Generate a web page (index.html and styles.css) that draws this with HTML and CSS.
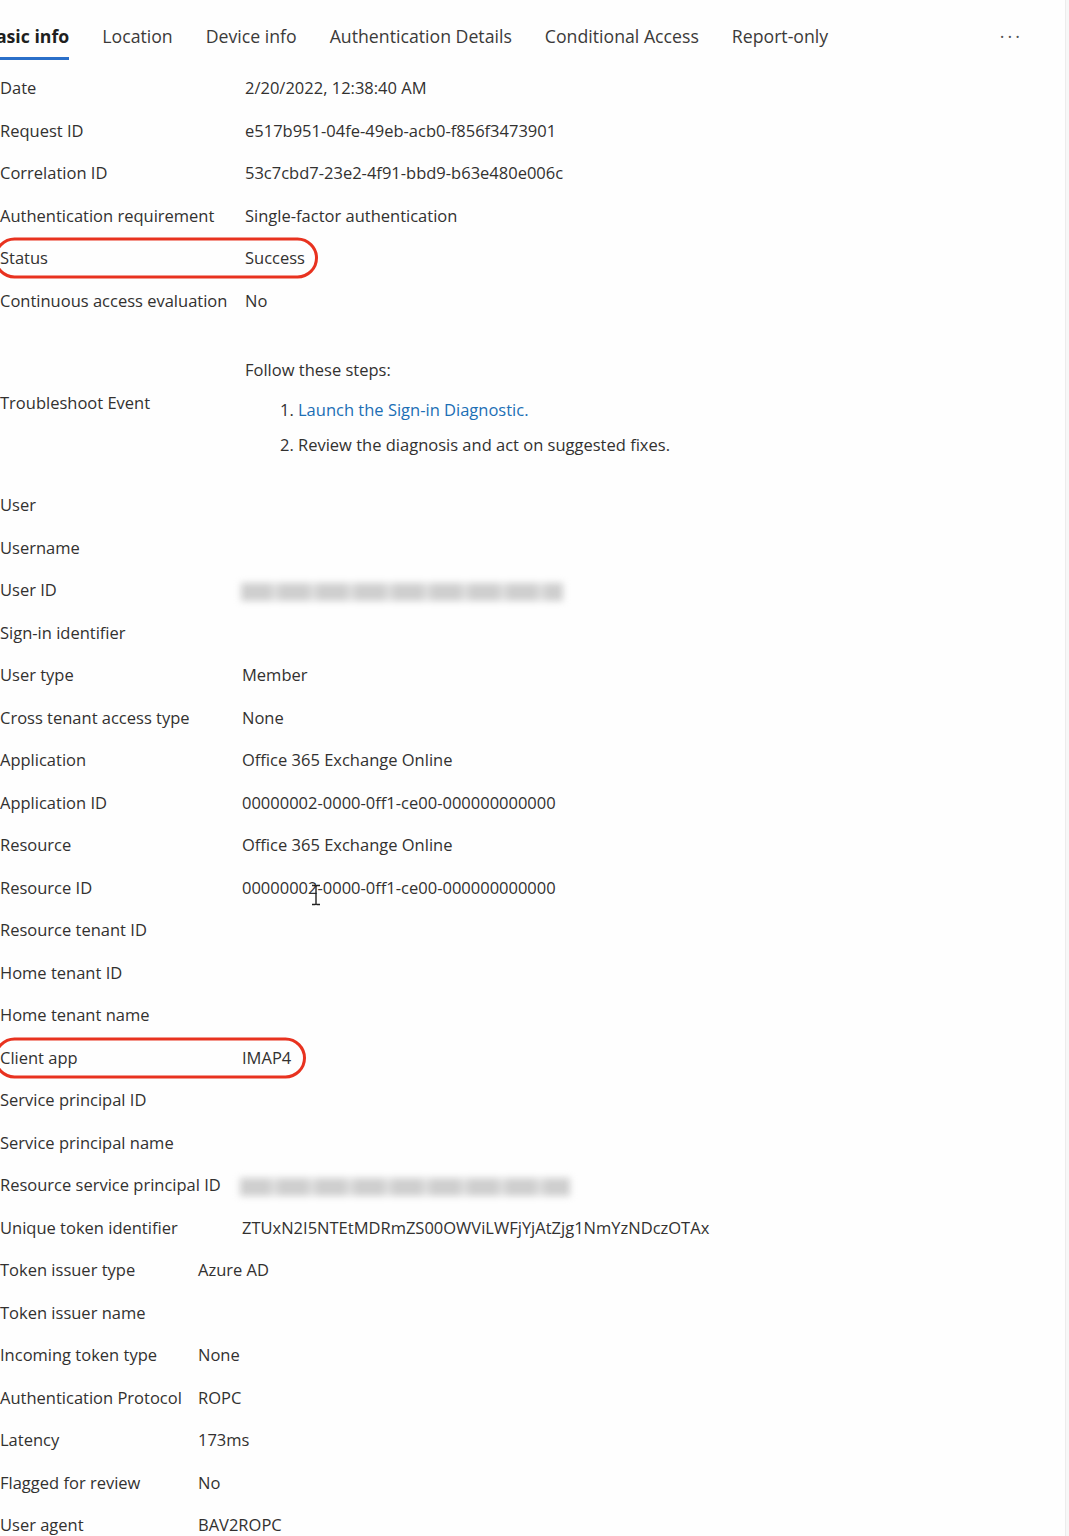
FILE: index.html
```html
<!DOCTYPE html>
<html lang="en">
<head>
<meta charset="utf-8">
<title>Sign-in details - Basic info</title>
<link rel="stylesheet" href="styles.css">
</head>
<body>
<div class="page">
  <nav class="tabs">
    <span class="tab active">Basic info</span>
    <span class="tab">Location</span>
    <span class="tab">Device info</span>
    <span class="tab">Authentication Details</span>
    <span class="tab">Conditional Access</span>
    <span class="tab">Report-only</span>
    <span class="more">&middot;&middot;&middot;</span>
  </nav>

  <div class="details s1">
    <div class="label">Date</div><div class="value">2/20/2022, 12:38:40 AM</div>
    <div class="label">Request ID</div><div class="value">e517b951-04fe-49eb-acb0-f856f3473901</div>
    <div class="label">Correlation ID</div><div class="value">53c7cbd7-23e2-4f91-bbd9-b63e480e006c</div>
    <div class="label">Authentication requirement</div><div class="value">Single-factor authentication</div>
    <div class="label hl-wrap">Status<span class="ring ring-status"></span></div><div class="value">Success</div>
    <div class="label">Continuous access evaluation</div><div class="value">No</div>
    <div class="label trouble-label">Troubleshoot Event</div>
    <div class="value trouble">
      <div class="steps-title">Follow these steps:</div>
      <ol class="steps">
        <li><span class="num">1.</span><a class="link" href="#">Launch the Sign-in Diagnostic.</a></li>
        <li><span class="num">2.</span><span>Review the diagnosis and act on suggested fixes.</span></li>
      </ol>
    </div>
  </div>

  <div class="details s2">
    <div class="label">User</div><div class="value"></div>
    <div class="label">Username</div><div class="value"></div>
    <div class="label">User ID</div><div class="value"><span class="blurred b-user"></span></div>
    <div class="label">Sign-in identifier</div><div class="value"></div>
    <div class="label">User type</div><div class="value">Member</div>
    <div class="label">Cross tenant access type</div><div class="value">None</div>
    <div class="label">Application</div><div class="value">Office 365 Exchange Online</div>
    <div class="label">Application ID</div><div class="value">00000002-0000-0ff1-ce00-000000000000</div>
    <div class="label">Resource</div><div class="value">Office 365 Exchange Online</div>
    <div class="label">Resource ID</div><div class="value cursor-wrap">00000002-0000-0ff1-ce00-000000000000<svg class="ibeam" width="12" height="22" viewBox="0 0 12 22"><path d="M2 1.5h3.2M6.8 1.5H10M6 2.2v17.6M2 20.5h3.2M6.8 20.5H10M5.2 1.5Q6 1.8 6 2.5M6.8 1.5Q6 1.8 6 2.5M5.2 20.5Q6 20.2 6 19.5M6.8 20.5Q6 20.2 6 19.5" fill="none" stroke="#222" stroke-width="1.4"/></svg></div>
    <div class="label">Resource tenant ID</div><div class="value"></div>
    <div class="label">Home tenant ID</div><div class="value"></div>
    <div class="label">Home tenant name</div><div class="value"></div>
    <div class="label hl-wrap">Client app<span class="ring ring-client"></span></div><div class="value">IMAP4</div>
    <div class="label">Service principal ID</div><div class="value"></div>
    <div class="label">Service principal name</div><div class="value"></div>
    <div class="label">Resource service principal ID</div><div class="value"><span class="blurred b-rsp"></span></div>
    <div class="label">Unique token identifier</div><div class="value token">ZTUxN2I5NTEtMDRmZS00OWViLWFjYjAtZjg1NmYzNDczOTAx</div>
  </div>

  <div class="details s3">
    <div class="label">Token issuer type</div><div class="value">Azure AD</div>
    <div class="label">Token issuer name</div><div class="value"></div>
    <div class="label">Incoming token type</div><div class="value">None</div>
    <div class="label">Authentication Protocol</div><div class="value">ROPC</div>
    <div class="label">Latency</div><div class="value">173ms</div>
    <div class="label">Flagged for review</div><div class="value">No</div>
    <div class="label">User agent</div><div class="value">BAV2ROPC</div>
  </div>
</div>
</body>
</html>
```

FILE: styles.css
```css
html, body {
  margin: 0;
  padding: 0;
  background: #f7f7f7;
}

body {
  font-family: "Open Sans", "Noto Sans", "Liberation Sans", sans-serif;
  font-size: 16.5px;
  color: #323130;
  overflow: hidden;
}

.page {
  width: 1065px;
  min-height: 1536px;
  background: #fefefe;
  border-right: 1px solid #ececec;
  overflow: hidden;
}

/* Tabs */
.tabs {
  display: flex;
  align-items: stretch;
  height: 60px;
  margin-left: -16px;
  gap: 33px;
}

.tab {
  display: flex;
  align-items: center;
  padding-top: 18px;
  padding-bottom: 3px;
  box-sizing: border-box;
  font-size: 17.7px;
  color: #3b3a39;
  border-bottom: 3px solid transparent;
  white-space: nowrap;
}

.tab.active {
  font-weight: 700;
  color: #201f1e;
  border-bottom-color: #2a6fc9;
}

.tab.active {
  padding-left: 0;
}

.more {
  margin-left: auto;
  margin-right: 42px;
  display: flex;
  align-items: center;
  padding-top: 12px;
  font-size: 18px;
  letter-spacing: 3px;
  color: #555;
}

/* Details grids */
.details {
  display: grid;
  grid-auto-rows: 42.5px;
  align-items: center;
}

.s1 {
  grid-template-columns: 245px 1fr;
  grid-template-rows: repeat(6, 42.5px) 162px;
  margin-top: 7px;
}

.s2 {
  grid-template-columns: 242px 1fr;
}

.s3 {
  grid-template-columns: 198px 1fr;
}

.label,
.value {
  white-space: nowrap;
  line-height: 22px;
}

.value {
  color: #323130;
}

/* Troubleshoot block */
.s1 .trouble,
.s1 .trouble-label {
  height: 162px;
}

.s1 .trouble-label {
  display: flex;
  align-items: center;
}

.s1 > .trouble {
  padding-top: 37px;
  box-sizing: border-box;
}

.steps-title {
  line-height: 22px;
}

.steps {
  list-style: none;
  margin: 18px 0 0 35px;
  padding: 0;
}

.steps li {
  display: flex;
  line-height: 22px;
  margin-bottom: 13px;
}

.num {
  width: 18px;
}

.link {
  color: #1c6fb5;
  text-decoration: none;
}

/* Highlight rings */
.hl-wrap {
  position: relative;
}

.ring {
  position: absolute;
  left: -6px;
  top: 50%;
  height: 41px;
  transform: translateY(-50%);
  border: 3px solid #e8321f;
  border-radius: 21px;
  box-sizing: border-box;
  pointer-events: none;
}

.ring-status {
  width: 324px;
}

.ring-client {
  width: 312px;
}

/* Blurred redacted values */
.blurred {
  display: inline-block;
  height: 18px;
  vertical-align: middle;
  background:
    repeating-linear-gradient(90deg, rgba(0,0,0,0.07) 0 30px, rgba(0,0,0,0) 30px 38px),
    #dedede;
  filter: blur(3.5px);
}

.b-user {
  width: 322px;
  margin-left: -1px;
}

.b-rsp {
  width: 330px;
  margin-left: -2px;
}

/* Mouse I-beam cursor */
.cursor-wrap {
  position: relative;
}

.ibeam {
  position: absolute;
  left: 68px;
  top: 7px;
}
```
